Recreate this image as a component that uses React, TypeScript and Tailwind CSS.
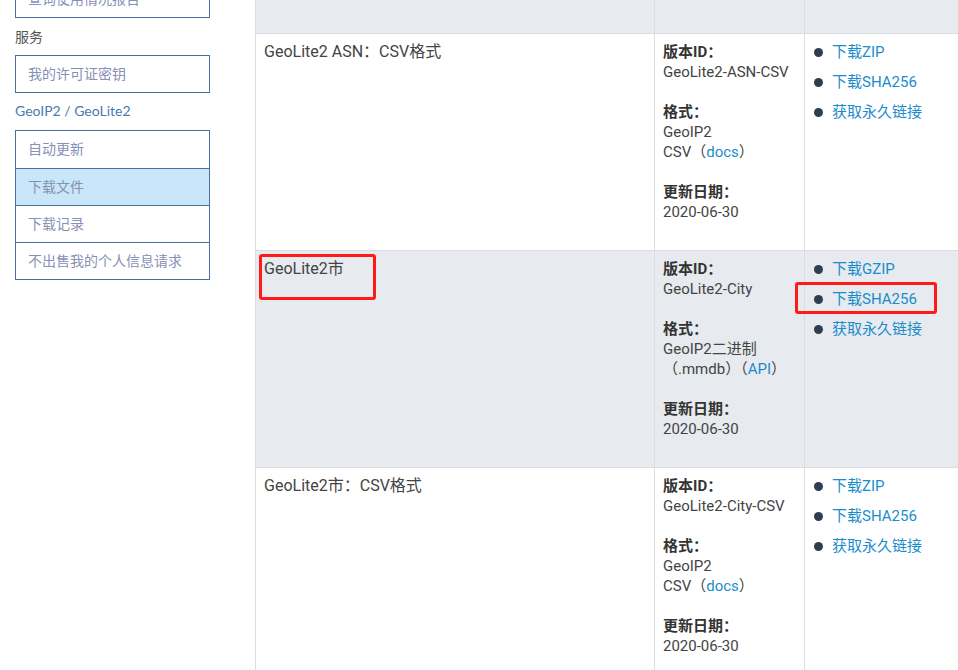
import React from 'react';

type Row = {
  title: string;
  edition: string;
  format: React.ReactNode;
  links: string[];
  gray?: boolean;
  marked?: boolean;
};

const link = 'text-[#1a8ccc]';

const rows: Row[] = [
  {
    title: 'GeoLite2 ASN：CSV格式',
    edition: 'GeoLite2-ASN-CSV',
    format: (
      <>
        <div>GeoIP2</div>
        <div>
          CSV（<span className={link}>docs</span>）
        </div>
      </>
    ),
    links: ['下载ZIP', '下载SHA256', '获取永久链接'],
  },
  {
    title: 'GeoLite2市',
    edition: 'GeoLite2-City',
    format: (
      <>
        <div>GeoIP2二进制</div>
        <div>
          （.mmdb）（<span className={link}>API</span>）
        </div>
      </>
    ),
    links: ['下载GZIP', '下载SHA256', '获取永久链接'],
    gray: true,
    marked: true,
  },
  {
    title: 'GeoLite2市：CSV格式',
    edition: 'GeoLite2-City-CSV',
    format: (
      <>
        <div>GeoIP2</div>
        <div>
          CSV（<span className={link}>docs</span>）
        </div>
      </>
    ),
    links: ['下载ZIP', '下载SHA256', '获取永久链接'],
  },
];

const sideItems = ['自动更新', '下载文件', '下载记录', '不出售我的个人信息请求'];

function Sidebar() {
  return (
    <div className="w-[255px] shrink-0 pl-[15px] pr-[45px] text-[14px] font-['Lato','Noto_Sans_CJK_SC',sans-serif]">
      <div className="-mt-[20px] h-[38px] border border-[#4a6fa5] px-3 leading-[36px] text-[#8790b5]">
        查询使用情况报告
      </div>
      <div className="mt-[9px] h-[20px] leading-[20px] text-[#555]">服务</div>
      <div className="mt-[8px] h-[38px] border border-[#4a6fa5] px-3 leading-[36px] text-[#8790b5]">
        我的许可证密钥
      </div>
      <div className="mt-[8px] h-[20px] leading-[20px] text-[#4b78b0]">GeoIP2 / GeoLite2</div>
      <div className="mt-[9px] border border-[#4a6fa5]">
        {sideItems.map((t, i) => (
          <div
            key={t}
            className={
              'h-[37px] whitespace-nowrap px-3 leading-[36px] text-[#8790b5] ' +
              (i > 0 ? 'border-t border-[#4a6fa5] ' : '') +
              (i === 1 ? 'bg-[#c8e7f8]' : 'bg-white')
            }
          >
            {t}
          </div>
        ))}
      </div>
    </div>
  );
}

function TableRow({ row }: { row: Row }) {
  return (
    <div
      className={
        'relative flex h-[217px] border-t border-[#dcdde0] ' + (row.gray ? 'bg-[#e7eaee]' : 'bg-white')
      }
    >
      <div className="w-[399px] border-r border-[#dcdde0] pl-[8px] pt-[8px] text-[16px] text-[#444]">
        {row.title}
      </div>
      <div className="w-[150px] border-r border-[#dcdde0] pl-[8px] pt-[8px] text-[#444]">
        <div className="font-bold text-[#333]">版本ID：</div>
        <div>{row.edition}</div>
        <div className="mt-[20px] font-bold text-[#333]">格式：</div>
        {row.format}
        <div className="mt-[20px] font-bold text-[#333]">更新日期：</div>
        <div>2020-06-30</div>
      </div>
      <div className="relative flex-1 pl-[9px] pt-[8px]">
        <ul className="flex flex-col gap-[10px]">
          {row.links.map((l) => (
            <li key={l} className="flex items-center">
              <span className="mr-[9px] h-[9px] w-[9px] rounded-full bg-[#2d3e50]" />
              <span className={link}>{l}</span>
            </li>
          ))}
        </ul>
        {row.marked && (
          <div className="absolute left-[-10px] top-[31px] h-[32px] w-[142px] rounded-[3px] border-[3px] border-[#ff1a1a]" />
        )}
      </div>
      {row.marked && (
        <div className="absolute left-[3px] top-[3px] h-[46px] w-[117px] rounded-[3px] border-[3px] border-[#ff1a1a]" />
      )}
    </div>
  );
}

export default function App() {
  return (
    <div className="flex h-[670px] w-[958px] overflow-hidden bg-white">
      <Sidebar />
      <div className="w-[703px] shrink-0 border-l border-[#dcdde0] text-[15px] leading-[20px] font-['Roboto','Noto_Sans_CJK_SC',sans-serif]">
        <div className="flex h-[33px] bg-[#e7eaee]">
          <div className="w-[399px] border-r border-[#dcdde0]" />
          <div className="w-[150px] border-r border-[#dcdde0]" />
          <div className="flex-1" />
        </div>
        {rows.map((r) => (
          <TableRow key={r.title} row={r} />
        ))}
      </div>
    </div>
  );
}
